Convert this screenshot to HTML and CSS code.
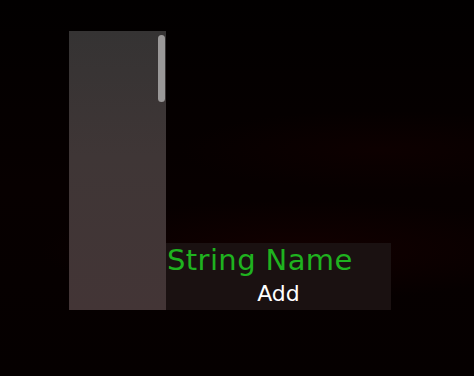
FILE: index.html
```html
<!DOCTYPE html>
<html>
<head>
<meta charset="utf-8">
<link rel="stylesheet" href="styles.css">
</head>
<body>
<div class="stage">
  <div class="list">
    <div class="scrollbar"></div>
  </div>
  <div class="editor">
    <div class="name">String Name</div>
    <div class="add">Add</div>
  </div>
</div>
</body>
</html>
```
FILE: styles.css
```css
html, body {
  margin: 0;
  padding: 0;
  width: 474px;
  height: 376px;
  overflow: hidden;
}
body {
  background:
    radial-gradient(ellipse 260px 50px at 300px 250px, rgba(40,0,0,0.35), transparent),
    radial-gradient(ellipse 200px 40px at 380px 150px, rgba(30,0,0,0.3), transparent),
    linear-gradient(180deg, #020000 0%, #070000 50%, #050000 100%);
  font-family: "DejaVu Sans", "Open Sans", sans-serif;
}
.stage {
  display: flex;
  align-items: flex-end;
  padding: 31px 0 0 69px;
}
.list {
  width: 97px;
  height: 279px;
  background: linear-gradient(180deg, #353333 0%, #3f3636 45%, #433536 100%);
  display: flex;
  justify-content: flex-end;
  padding: 4px 1px 0 0;
  box-sizing: border-box;
}
.scrollbar {
  width: 7px;
  height: 67px;
  border-radius: 4px;
  background: #9a9898;
}
.editor {
  width: 225px;
  height: 67px;
  background: #1a1111;
  display: flex;
  flex-direction: column;
}
.name {
  color: #1fb21f;
  font-size: 29px;
  line-height: 30px;
  letter-spacing: 0.4px;
  margin-top: 2px;
  padding-left: 1px;
  white-space: nowrap;
}
.add {
  color: #ffffff;
  font-size: 22px;
  line-height: 24px;
  text-align: center;
  margin-top: 7px;
}
```
